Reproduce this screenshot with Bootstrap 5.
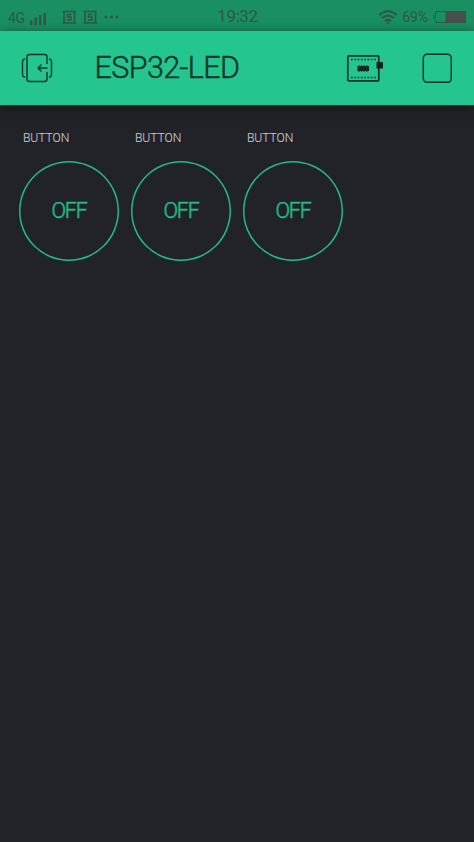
<!DOCTYPE html>
<html lang="en">
<head>
<meta charset="utf-8">
<meta name="viewport" content="width=device-width, initial-scale=1">
<title>ESP32-LED</title>
<link href="https://cdn.jsdelivr.net/npm/bootstrap@5.3.0/dist/css/bootstrap.min.css" rel="stylesheet">
<style>
body{background:#212328;font-family:Roboto,"Liberation Sans",sans-serif;min-height:100vh;overflow:hidden}
.statusbar{height:31px;background:#198f62;color:#32564a;line-height:30px;padding:0 7px 0 8px;display:grid;grid-template-columns:1fr auto 1fr}
.net{font-size:14px;letter-spacing:-.4px;padding-top:3px}
.clock{font-size:17px;letter-spacing:-.4px;padding-top:1px}
.batt{font-size:14px;letter-spacing:-.1px;padding-top:1px}
.appbar{height:74px;background:#24c58e;color:#0c3428;padding:0 22px 0 21px;box-shadow:0 2px 10px rgba(0,0,0,.5)}
.title{font-size:30.5px;font-weight:300;line-height:36px;letter-spacing:-.6px;margin-left:41.500px;-webkit-text-stroke:.4px}
.board{padding:23px 19px;gap:12px}
.tile{width:100px}
.tile-label{color:#c4c5c6;font-size:13.5px;font-weight:300;line-height:18px;padding-left:4px;margin-bottom:15px;letter-spacing:-.1px;transform:scaleX(.9);transform-origin:4px 0;-webkit-text-stroke:.15px}
.round{width:100px;height:100px;border:0;box-shadow:inset 0 0 0 1.5px #24b987;color:#24b987;font-size:21.5px;font-weight:300;letter-spacing:-1.2px;background:none;padding:1px 0 0;-webkit-text-stroke:.5px}
.square{margin-left:39px}
svg{display:block;flex:none}
</style>
</head>
<body>
<header>
<div class="statusbar">
<div class="d-flex align-items-center">
<span class="net">4G</span>
<svg class="ms-1" width="92" height="20" viewBox="0 0 92 20" fill="currentColor"><path d="M1 13.500h2.500v4.500H1zM5.500 10.500H8V18H5.500zM10 8h2.500v10H10zM14.500 6H17v12h-2.500z"/><g id="s" fill="none" stroke="currentColor"><path d="M35 4.500h10.500v11.500H35zM33.500 4.500H35M45.500 16h1.500M33.500 16H35M45.500 4.500H47" stroke-width="1.600"/><path d="M42.500 7.500H38.500V10H42v3h-4" stroke-width="1.400"/></g><use href="#s" x="21"/><circle cx="77" cy="10" r="1.500"/><circle cx="82.500" cy="10" r="1.500"/><circle cx="88" cy="10" r="1.500"/></svg>
</div>
<span class="clock">19:32</span>
<div class="d-flex align-items-center justify-content-end">
<svg width="20" height="16" viewBox="0 0 20 16" fill="none" stroke="currentColor" stroke-width="2"><path d="M1 6Q10-1.500 19 6M4 9.200Q10 4 16 9.200M7 12.200Q10 9.500 13 12.200"/><path d="M8 13.200h4L10 15.500z" fill="currentColor" stroke="none"/></svg>
<span class="batt ms-1">69%</span>
<svg class="ms-1" width="35" height="14" viewBox="0 0 35 14"><path d="M3.500 1.500h30v11h-30zM1.500 5v4" fill="none" stroke="#32564a"/><path d="M13.500 1.500h20v11h-20z" fill="#494f4a"/></svg>
</div>
</div>
<nav class="appbar d-flex align-items-center position-relative">
<svg width="32" height="32" viewBox="0 0 32 32" fill="none" stroke="currentColor" stroke-width="1.400" stroke-linecap="round" stroke-linejoin="round"><path d="M26 11.500V5Q26 2.500 23.500 2.500h-15Q6 2.500 6 5v22Q6 29.500 8.500 29.500h15Q26 29.500 26 27V20.500M26 16h-9M20 13l-3 3 3 3M3.500 7Q1.500 7.500 1.500 9.500v13Q1.500 24.500 3.500 25M28.500 7Q30.500 7.500 30.500 9.500v13Q30.500 24.500 28.500 25"/></svg>
<h1 class="title mb-0">ESP32-LED</h1>
<div class="d-flex align-items-center ms-auto">
<svg width="37" height="30" viewBox="0 0 37 30" fill="none" stroke="currentColor"><rect x="1.800" y="2.800" width="31" height="25" rx="1" stroke-width="1.700"/><path d="M5 6.500h25M5 24.500h25" stroke-width="1.700" stroke-dasharray="1.800 1.500"/><path d="M11.500 13h11.500v5H11.500zM30.500 9H37v6.500h-6.500z" fill="#15211e" stroke="none"/><path d="M12.500 15.500h10" stroke-width="6.500" stroke-dasharray="1.200 1.400"/></svg>
<svg width="30" height="30" viewBox="0 0 30 30" class="square"><rect x="1.300" y="1.300" width="28" height="28" rx="4" fill="none" stroke="currentColor" stroke-width="1.500"/></svg>
</div>
</nav>
</header>
<main class="board d-flex">
<section class="tile"><div class="tile-label">BUTTON</div><button type="button" class="round btn rounded-circle">OFF</button></section>
<section class="tile"><div class="tile-label">BUTTON</div><button type="button" class="round btn rounded-circle">OFF</button></section>
<section class="tile"><div class="tile-label">BUTTON</div><button type="button" class="round btn rounded-circle">OFF</button></section>
</main>
<script src="https://cdn.jsdelivr.net/npm/bootstrap@5.3.0/dist/js/bootstrap.bundle.min.js"></script>
</body>
</html>
